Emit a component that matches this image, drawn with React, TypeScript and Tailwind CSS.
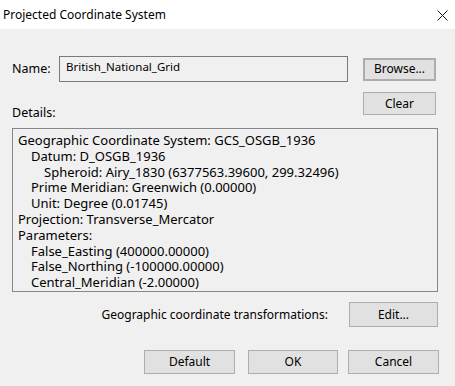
import React from "react";

const DETAILS: { text: string; level: number }[] = [
  { text: "Geographic Coordinate System: GCS_OSGB_1936", level: 0 },
  { text: "Datum: D_OSGB_1936", level: 1 },
  { text: "Spheroid: Airy_1830 (6377563.39600, 299.32496)", level: 2 },
  { text: "Prime Meridian: Greenwich (0.00000)", level: 1 },
  { text: "Unit: Degree (0.01745)", level: 1 },
  { text: "Projection: Transverse_Mercator", level: 0 },
  { text: "Parameters:", level: 0 },
  { text: "False_Easting (400000.00000)", level: 1 },
  { text: "False_Northing (-100000.00000)", level: 1 },
  { text: "Central_Meridian (-2.00000)", level: 1 },
];

const indent = ["pl-0", "pl-[13px]", "pl-[26px]"];

function Btn({ label, className = "" }: { label: string; className?: string }) {
  return (
    <button
      className={
        "flex items-center justify-center bg-[#e1e1e1] border border-[#adadad] text-[12px] text-black " +
        className
      }
    >
      {label}
    </button>
  );
}

export default function App() {
  return (
    <div className="w-[455px] h-[386px] bg-[#f0f0f0] font-['Noto_Sans',sans-serif] text-[12px] text-black overflow-hidden">
      {/* Title bar */}
      <div className="h-[29px] bg-white flex items-center justify-between pl-[3px] pr-[7px]">
        <span className="text-[12px]">Projected Coordinate System</span>
        <svg width="11" height="11" viewBox="0 0 11 11" className="mt-[1px]">
          <path d="M0.5 0.5 L10.5 10.5 M10.5 0.5 L0.5 10.5" stroke="#1a1a1a" strokeWidth="1" />
        </svg>
      </div>

      <div className="px-[12px]">
        {/* Name row */}
        <div className="flex items-center mt-[27px]">
          <span className="w-[47px] text-[12.5px]">Name:</span>
          <div className="w-[289px] h-[26px] border border-[#7a7a7a] bg-[#f0f0f0] pl-[6px] flex items-start pt-[1px] text-[11.5px]">
            British_National_Grid
          </div>
          <Btn label="Browse..." className="ml-[15px] w-[73px] h-[23px] border-[#0078d7] border-2" />
        </div>

        {/* Details label + Clear */}
        <div className="flex items-end justify-between mt-[10px] pr-[7px]">
          <span className="mb-[-8px] text-[12.5px]">Details:</span>
          <Btn label="Clear" className="w-[73px] h-[23px]" />
        </div>

        {/* Details box */}
        <div className="mt-[13px] w-[426px] h-[164px] border border-[#828790] pt-[4px] pl-[5px] text-[13px] leading-[15.8px]">
          {DETAILS.map((d) => (
            <div key={d.text} className={indent[d.level]}>
              {d.text}
            </div>
          ))}
        </div>

        {/* Transformations row */}
        <div className="flex items-center justify-end mt-[10px] mr-[5px]">
          <span className="mr-[21px] text-[12px]">Geographic coordinate transformations:</span>
          <Btn label="Edit..." className="w-[89px] h-[25px]" />
        </div>

        {/* Bottom buttons */}
        <div className="flex justify-end mt-[23px] mr-[4px]">
          <Btn label="Default" className="w-[91px] h-[24px]" />
          <Btn label="OK" className="ml-[13px] w-[90px] h-[24px]" />
          <Btn label="Cancel" className="ml-[10px] w-[91px] h-[24px]" />
        </div>
      </div>
    </div>
  );
}
